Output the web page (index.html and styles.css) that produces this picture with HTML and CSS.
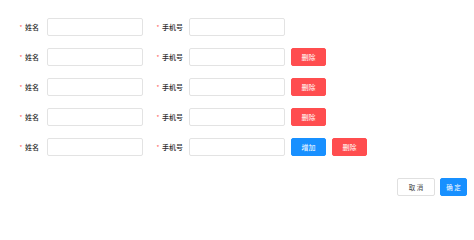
FILE: index.html
```html
<!DOCTYPE html>
<html lang="zh-CN">
<head>
<meta charset="utf-8">
<link rel="stylesheet" href="styles.css">
</head>
<body>
<div class="dialog">
  <div class="form">
    <div class="row">
      <label class="label l-name"><span class="req">*</span>姓名</label>
      <input class="input" type="text">
      <label class="label l-phone"><span class="req">*</span>手机号</label>
      <input class="input" type="text">
    </div>
    <div class="row">
      <label class="label l-name"><span class="req">*</span>姓名</label>
      <input class="input" type="text">
      <label class="label l-phone"><span class="req">*</span>手机号</label>
      <input class="input" type="text">
      <button class="btn btn-danger">删除</button>
    </div>
    <div class="row">
      <label class="label l-name"><span class="req">*</span>姓名</label>
      <input class="input" type="text">
      <label class="label l-phone"><span class="req">*</span>手机号</label>
      <input class="input" type="text">
      <button class="btn btn-danger">删除</button>
    </div>
    <div class="row">
      <label class="label l-name"><span class="req">*</span>姓名</label>
      <input class="input" type="text">
      <label class="label l-phone"><span class="req">*</span>手机号</label>
      <input class="input" type="text">
      <button class="btn btn-danger">删除</button>
    </div>
    <div class="row">
      <label class="label l-name"><span class="req">*</span>姓名</label>
      <input class="input" type="text">
      <label class="label l-phone"><span class="req">*</span>手机号</label>
      <input class="input" type="text">
      <button class="btn btn-primary">增加</button>
      <button class="btn btn-danger">删除</button>
    </div>
  </div>
  <div class="footer">
    <button class="btn btn-default">取 消</button>
    <button class="btn btn-primary btn-ok">确 定</button>
  </div>
</div>
</body>
</html>
```

FILE: styles.css
```css
* { box-sizing: border-box; }
html, body { margin: 0; padding: 0; }
body {
  width: 474px;
  height: 216px;
  overflow: hidden;
  background: #fff;
  font-family: "Noto Sans CJK SC", "Noto Sans", sans-serif;
}
.form { padding-top: 18px; }
.row {
  display: flex;
  align-items: center;
  height: 18px;
  margin-bottom: 12px;
}
.label {
  display: flex;
  align-items: center;
  justify-content: flex-end;
  font-size: 7px;
  font-weight: 500;
  color: #2b2b2b;
  height: 18px;
}
.l-name { width: 47px; padding-right: 8px; }
.l-phone { width: 46px; padding-right: 6px; }
.req {
  color: #ff4d4f;
  font-size: 6px;
  margin-right: 3px;
  font-family: "Liberation Sans", sans-serif;
}
.input {
  width: 96px;
  height: 18px;
  margin: 0;
  border: 1px solid #e3e3e3;
  border-radius: 2px;
  padding: 0 5px;
  font-size: 7px;
  outline: none;
  background: #fff;
}
.btn {
  height: 18px;
  margin: 0;
  padding: 0;
  border: 1px solid transparent;
  border-radius: 2px;
  font-family: inherit;
  font-size: 7px;
  line-height: 1;
  cursor: pointer;
}
.row .btn { width: 35px; margin-left: 6px; }
.btn-danger { background: #ff4d4f; border-color: #ff4d4f; color: #fff; }
.btn-primary { background: #1890ff; border-color: #1890ff; color: #fff; }
.btn-default { background: #fff; border-color: #e0e0e0; color: #444; width: 38px; }
.footer {
  display: flex;
  justify-content: flex-end;
  gap: 5px;
  margin-top: 22px;
  padding-right: 7px;
}
.footer .btn { font-size: 6.5px; }
.btn-ok { width: 27px; }
```
